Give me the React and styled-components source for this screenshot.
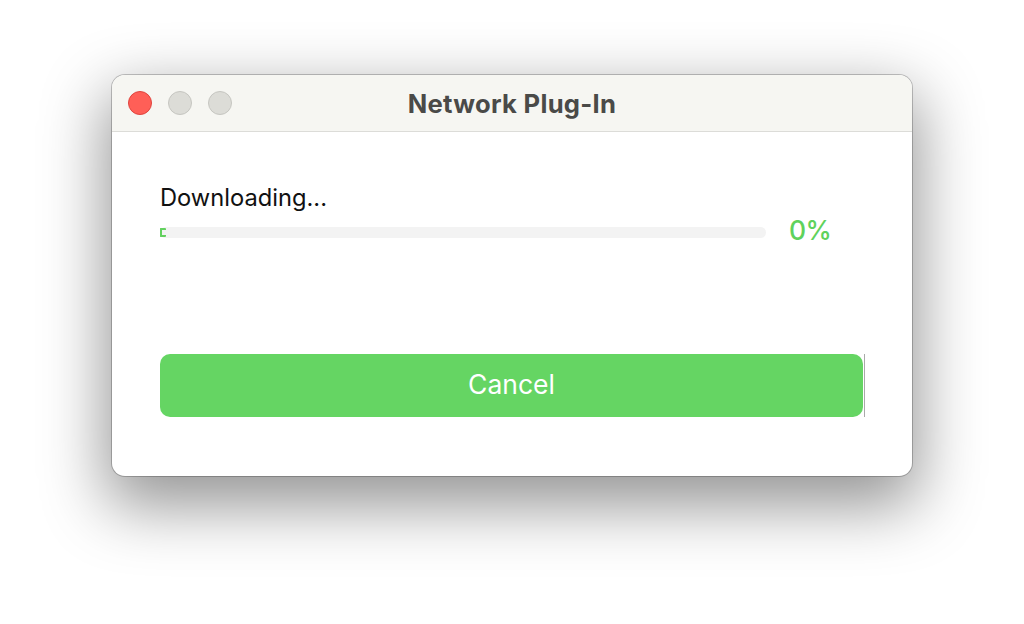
import React from "react";
import styled, { createGlobalStyle } from "styled-components";

const Global = createGlobalStyle`
  html, body {
    margin: 0;
    padding: 0;
    background: #ffffff;
  }
  body {
    font-family: Inter, "Noto Sans", "Liberation Sans", sans-serif;
    -webkit-font-smoothing: antialiased;
  }
`;

const Page = styled.div`
  width: 1024px;
  height: 624px;
  padding-top: 75px;
  box-sizing: border-box;
  overflow: hidden;
`;

const Window = styled.div`
  width: 800px;
  height: 401px;
  margin: 0 auto;
  border-radius: 13px;
  background: #ffffff;
  overflow: hidden;
  display: flex;
  flex-direction: column;
  box-shadow: 0 0 0 1px rgba(0, 0, 0, 0.22), 0 24px 64px 6px rgba(0, 0, 0, 0.42);
`;

const TitleBar = styled.div`
  position: relative;
  height: 56px;
  flex: none;
  display: flex;
  align-items: center;
  justify-content: center;
  background: #f6f6f2;
  border-bottom: 1px solid #dcdcd8;
`;

const Lights = styled.div`
  position: absolute;
  left: 16px;
  top: 16px;
  display: flex;
  gap: 16px;
`;

const Light = styled.span`
  width: 24px;
  height: 24px;
  border-radius: 50%;
  box-sizing: border-box;
  background: ${(p) => (p.$close ? "#ff5f57" : "#dcdcd7")};
  border: 1px solid ${(p) => (p.$close ? "#e0443e" : "#c6c6c1")};
`;

const Title = styled.div`
  font-size: 25.6px;
  font-weight: 700;
  color: #4a4a48;
  letter-spacing: 0.3px;
`;

const Body = styled.div`
  flex: 1;
  padding: 52px 49px 0 48px;
  display: flex;
  flex-direction: column;
`;

const Label = styled.div`
  font-size: 23.7px;
  line-height: 28px;
  color: #111111;
`;

const ProgressRow = styled.div`
  display: flex;
  align-items: center;
  margin-top: 3px;
  height: 34px;
`;

const Track = styled.div`
  position: relative;
  width: 606px;
  height: 11px;
  border-radius: 6px;
  background: #f3f3f3;
`;

const Fill = styled.div`
  position: absolute;
  left: 0;
  top: 1px;
  height: 9px;
  border-left: 2px solid #63d15f;
  border-top: 2px solid #63d15f;
  border-bottom: 2px solid #63d15f;
  box-sizing: border-box;
  border-radius: 1px;
`;

const Percent = styled.div`
  margin-left: 23px;
  margin-top: -4px;
  font-size: 26.5px;
  font-weight: 500;
  letter-spacing: -0.5px;
  color: #5fd25c;
`;

const ButtonFrame = styled.div`
  margin-top: 105px;
  width: 704px;
  border-right: 1px solid #a9a9a9;
`;

const Button = styled.button`
  display: block;
  width: 703px;
  height: 63px;
  padding: 0 0 4px;
  border: none;
  border-radius: 10px;
  background: #65d563;
  color: #ffffff;
  font-family: inherit;
  font-size: 26.5px;
  font-weight: 400;
  cursor: pointer;
`;

export default function App() {
  const progress = 0;
  return (
    <Page>
      <Global />
      <Window>
        <TitleBar>
          <Lights>
            <Light $close />
            <Light />
            <Light />
          </Lights>
          <Title>Network Plug-In</Title>
        </TitleBar>
        <Body>
          <Label>Downloading...</Label>
          <ProgressRow>
            <Track>
              <Fill style={{ width: Math.max(6, progress * 6.06) + "px" }} />
            </Track>
            <Percent>{progress}%</Percent>
          </ProgressRow>
          <ButtonFrame>
            <Button>Cancel</Button>
          </ButtonFrame>
        </Body>
      </Window>
    </Page>
  );
}
